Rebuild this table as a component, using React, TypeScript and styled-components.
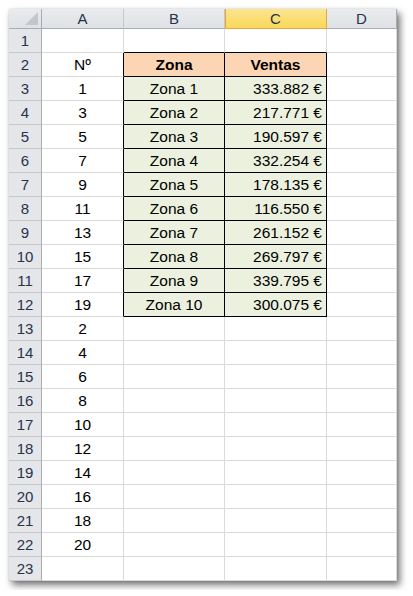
import React from 'react';
import styled, { createGlobalStyle, css } from 'styled-components';

const GlobalStyle = createGlobalStyle`
  body {
    margin: 0;
    background: #ffffff;
    font-family: 'Liberation Sans', Arial, sans-serif;
  }
`;

const Page = styled.div`
  padding: 9px;
`;

const Sheet = styled.div`
  display: grid;
  grid-template-columns: 33px 82px 101px 102px 70px;
  grid-template-rows: 20px repeat(23, 24px);
  width: 388px;
  background: #ffffff;
  box-shadow: 3px 4px 7px rgba(0, 0, 0, 0.55), 0 0 2px rgba(0, 0, 0, 0.12);
  font-size: 15.5px;
  color: #000000;
`;

const Corner = styled.div`
  position: relative;
  box-sizing: border-box;
  background: linear-gradient(#e9ebee, #dfe2e6);
  border-right: 1px solid #a9acb1;
  border-bottom: 1px solid #a9acb1;
  &::after {
    content: '';
    position: absolute;
    right: 3px;
    bottom: 3px;
    width: 0;
    height: 0;
    border-left: 13px solid transparent;
    border-bottom: 13px solid #c3c6cb;
  }
`;

const ColHead = styled.div<{ $active?: boolean; $last?: boolean }>`
  box-sizing: border-box;
  display: flex;
  align-items: center;
  justify-content: center;
  font-size: 15px;
  color: #27344a;
  background: linear-gradient(#e9ebee, #dfe2e6);
  border-right: 1px solid ${p => (p.$last ? '#a9acb1' : '#c4c7cc')};
  border-bottom: 1px solid #a9acb1;
  ${p =>
    p.$active &&
    css`
      background: linear-gradient(#fbe58f, #f9d85a);
      border-right: 1px solid #e9a33f;
      border-bottom: 1px solid #e9a33f;
      box-shadow: inset 1px 0 0 #e9a33f;
    `}
`;

const RowHead = styled.div`
  box-sizing: border-box;
  display: flex;
  align-items: center;
  justify-content: center;
  font-size: 15px;
  color: #27344a;
  background: #e4e6ea;
  border-right: 1px solid #a9acb1;
  border-bottom: 1px solid #c4c7cc;
`;

type Fill = 'none' | 'peach' | 'green';

const fills: Record<Fill, string> = {
  none: '#ffffff',
  peach: '#fcd5b4',
  green: '#ebf1de'
};

const Cell = styled.div<{
  $fill: Fill;
  $align: 'center' | 'right';
  $bold?: boolean;
  $right?: boolean;
  $bottom?: boolean;
}>`
  box-sizing: border-box;
  display: flex;
  align-items: center;
  justify-content: ${p => (p.$align === 'right' ? 'flex-end' : 'center')};
  padding: 0 4px;
  white-space: nowrap;
  background: ${p => fills[p.$fill]};
  font-weight: ${p => (p.$bold ? 700 : 400)};
  border-right: 1px solid ${p => (p.$right ? '#000000' : '#dadada')};
  border-bottom: 1px solid ${p => (p.$bottom ? '#000000' : '#dadada')};
`;

const zones = [
  '333.882 €',
  '217.771 €',
  '190.597 €',
  '332.254 €',
  '178.135 €',
  '116.550 €',
  '261.152 €',
  '269.797 €',
  '339.795 €',
  '300.075 €'
];

const numbers = ['1', '3', '5', '7', '9', '11', '13', '15', '17', '19', '2', '4', '6', '8', '10', '12', '14', '16', '18', '20'];

const colA = (row: number) => {
  if (row === 2) return 'Nº';
  if (row >= 3 && row <= 22) return numbers[row - 3];
  return '';
};

const App = () => {
  const rows = Array.from({ length: 23 }, (_, i) => i + 1);
  return (
    <Page>
      <GlobalStyle />
      <Sheet>
        <Corner />
        <ColHead>A</ColHead>
        <ColHead>B</ColHead>
        <ColHead $active>C</ColHead>
        <ColHead $last>D</ColHead>
        {rows.map(row => {
          const inTable = row >= 2 && row <= 12;
          const isHead = row === 2;
          const fill: Fill = isHead ? 'peach' : inTable ? 'green' : 'none';
          const zona = isHead ? 'Zona' : inTable ? `Zona ${row - 2}` : '';
          const ventas = isHead ? 'Ventas' : inTable ? zones[row - 3] : '';
          return (
            <React.Fragment key={row}>
              <RowHead>{row}</RowHead>
              <Cell $fill="none" $align="center" $right={inTable}>
                {colA(row)}
              </Cell>
              <Cell
                $fill={inTable ? fill : 'none'}
                $align="center"
                $bold={isHead}
                $right={inTable}
                $bottom={inTable || row === 1}
              >
                {zona}
              </Cell>
              <Cell
                $fill={inTable ? fill : 'none'}
                $align={isHead ? 'center' : 'right'}
                $bold={isHead}
                $right={inTable}
                $bottom={inTable || row === 1}
              >
                {ventas}
              </Cell>
              <Cell $fill="none" $align="center" />
            </React.Fragment>
          );
        })}
      </Sheet>
    </Page>
  );
};

export default App;
